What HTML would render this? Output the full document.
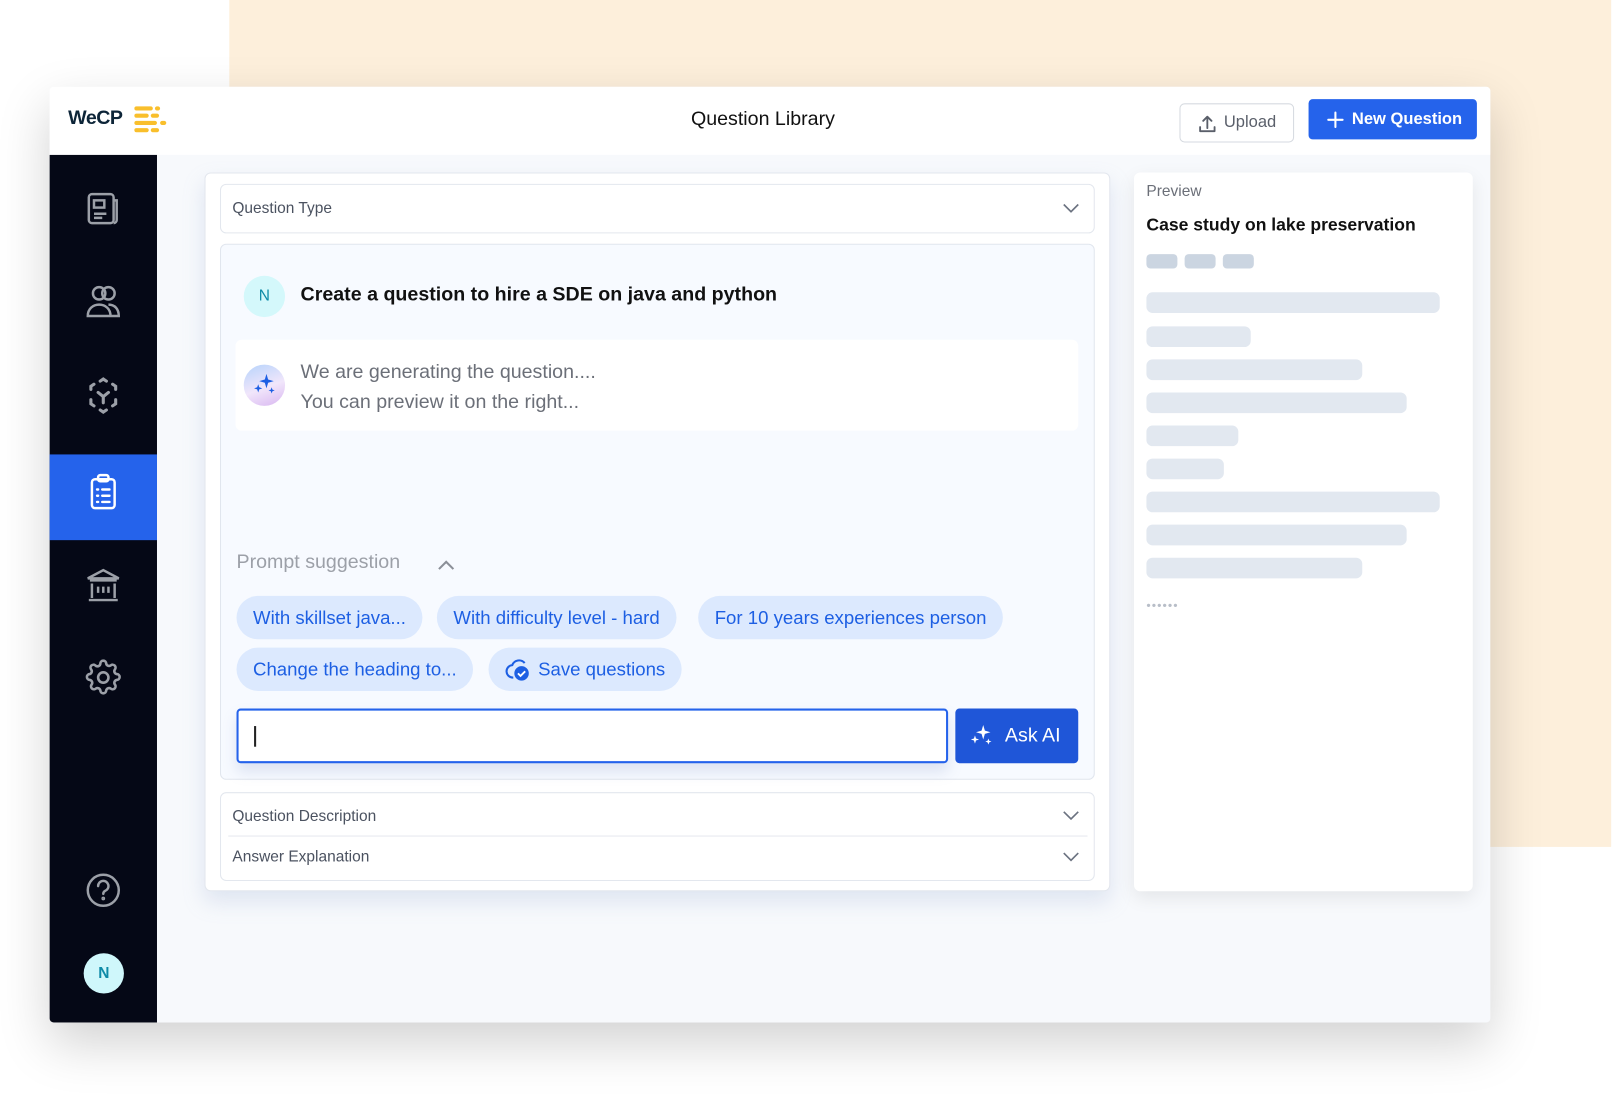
<!DOCTYPE html>
<html><head><meta charset="utf-8"><style>
*{box-sizing:border-box;margin:0;padding:0}
html,body{width:1619px;height:1098px;overflow:hidden;background:#fff;font-family:"Liberation Sans",sans-serif}
#w{position:absolute;left:0;top:0;width:1568px;height:1064px;transform:scale(1.0328);transform-origin:0 0}
.abs{position:absolute}
.peach{left:222px;top:0;width:1338px;height:820px;background:#fdefdb}
.win{left:48px;top:84px;width:1395px;height:906px;background:#f7f9fc;box-shadow:0 20px 50px rgba(0,0,0,.18);border-radius:4px;overflow:hidden}
.hdr{left:0;top:0;width:1395px;height:66px;background:#fff}
.side{left:0;top:66px;width:104px;height:840px;background:#050816}
.ico{position:absolute;left:32px;width:40px;height:40px}
.card{background:#fff;border:1px solid #e3e7ee;border-radius:6px}
.chip{position:absolute;height:42px;border-radius:21px;background:#dce9fe;color:#1d5fe3;font-size:18px;line-height:42px;padding:0 16px}
.sk{position:absolute;left:12px;height:20px;background:#e2e8f0;border-radius:6px}
.chev{position:absolute;right:14px;width:16px;height:10px}
</style></head><body><div id="w">
<div class="abs peach"></div>
<div class="abs win">
 <div class="abs hdr">
  <div class="abs" style="left:18px;top:20px;font-size:19px;font-weight:bold;color:#0d2538;letter-spacing:-.5px">WeCP</div>
  <svg class="abs" style="left:82px;top:18px" width="34" height="28" viewBox="0 0 34 28"><g fill="#f9bf2c"><rect x="0" y="1" width="18" height="4" rx="2"/><rect x="20" y="1" width="5" height="4" rx="2"/><rect x="0" y="8" width="14" height="4" rx="2"/><rect x="16" y="8" width="8" height="4" rx="2"/><rect x="0" y="15" width="22" height="4" rx="2"/><rect x="25" y="15" width="6" height="4" rx="2"/><rect x="0" y="22" width="14" height="4" rx="2"/><rect x="16" y="22" width="8" height="4" rx="2"/></g></svg>
  <div class="abs" style="left:621px;top:21px;font-size:19px;color:#111">Question Library</div>
  <div class="abs" style="left:1094px;top:16px;width:111px;height:38px;border:1px solid #d6dae0;border-radius:5px;color:#5a5f6a;font-size:16px;line-height:36px;padding-left:42px">Upload
   <svg class="abs" style="left:16px;top:9px" width="20" height="20" viewBox="0 0 20 20" fill="none" stroke="#5a5f6a" stroke-width="1.8" stroke-linecap="round" stroke-linejoin="round"><path d="M10 14V3M6 7l4-4 4 4M3 13v4h14v-4"/></svg></div>
  <div class="abs" style="left:1219px;top:12px;width:163px;height:39px;background:#2563eb;border-radius:4px;color:#fff;font-size:16px;font-weight:bold;line-height:39px;padding-left:42px">New Question
   <svg class="abs" style="left:18px;top:12px" width="16" height="16" viewBox="0 0 16 16" stroke="#fff" stroke-width="2" stroke-linecap="round"><path d="M8 1v14M1 8h14"/></svg></div>
 </div>
 <div class="abs side">
  <svg class="ico" style="top:32px" viewBox="0 0 40 40" fill="none" stroke="#9ca0a8" stroke-width="2.4"><rect x="6" y="6" width="24" height="28" rx="3"/><path d="M30 12h3v19a3 3 0 0 1-3 3"/><rect x="11" y="12" width="10" height="7"/><path d="M11 25h12M11 29h8"/></svg>
  <svg class="ico" style="top:122px" viewBox="0 0 40 40" fill="none" stroke="#9ca0a8" stroke-width="2.4"><circle cx="16" cy="12" r="6"/><circle cx="25" cy="12" r="6"/><path d="M5 34c0-7 5-11 11-11s11 4 11 11zM25 23c6 0 10 4 10 11H27"/></svg>
  <svg class="ico" style="top:213px" viewBox="0 0 40 40" fill="none" stroke="#9ca0a8" stroke-width="3" stroke-linecap="round"><path d="M17 6l3-2 3 2M8 14v-3l3-2M29 9l3 2v3M8 24v4l3 2M32 24v4l-3 2M17 34l3 2 3-2M15 17l5 4 5-4M20 21v6"/></svg>
  <div class="abs" style="left:0;top:290px;width:104px;height:83px;background:#2563eb"></div>
  <svg class="ico" style="top:306px" viewBox="0 0 40 40" fill="none" stroke="#fff" stroke-width="2.4" stroke-linecap="round"><rect x="9" y="8" width="22" height="28" rx="3"/><rect x="15" y="4" width="10" height="6" rx="2"/><path d="M14 18h1M19 18h7M14 24h1M19 24h7M14 30h1M19 30h7"/></svg>
  <svg class="ico" style="top:396px" viewBox="0 0 40 40" fill="none" stroke="#9ca0a8" stroke-width="2.4"><path d="M5 14L20 6l15 8zM7 16h26M9 19v14M31 19v14M6 35h28M15 22v6M20 22v6M25 22v6"/></svg>
  <svg class="ico" style="top:486px" viewBox="0 0 24 24" fill="none" stroke="#9ca0a8" stroke-width="1.5"><circle cx="12" cy="12" r="3"/><path d="M10.3 3.9a1.7 1.7 0 0 1 3.4 0 1.7 1.7 0 0 0 2.6 1.1 1.7 1.7 0 0 1 2.4 2.4 1.7 1.7 0 0 0 1.1 2.6 1.7 1.7 0 0 1 0 3.4 1.7 1.7 0 0 0-1.1 2.6 1.7 1.7 0 0 1-2.4 2.4 1.7 1.7 0 0 0-2.6 1.1 1.7 1.7 0 0 1-3.4 0 1.7 1.7 0 0 0-2.6-1.1 1.7 1.7 0 0 1-2.4-2.4 1.7 1.7 0 0 0-1.1-2.6 1.7 1.7 0 0 1 0-3.4A1.7 1.7 0 0 0 5 7.4 1.7 1.7 0 0 1 7.4 5a1.7 1.7 0 0 0 2.9-1.1z"/></svg>
  <svg class="ico" style="top:692px" viewBox="0 0 40 40" fill="none" stroke="#9ca0a8" stroke-width="2.4" stroke-linecap="round"><circle cx="20" cy="20" r="15"/><path d="M15 16a5 5 0 1 1 7 4.5c-1.5.7-2 1.5-2 3"/><circle cx="20" cy="28" r=".6" fill="#9ca0a8"/></svg>
  <div class="abs" style="left:33px;top:773px;width:39px;height:39px;border-radius:50%;background:#cff7fb;color:#0e8ba8;font-weight:bold;font-size:15px;text-align:center;line-height:39px">N</div>
 </div>
 <div class="abs card" style="left:150px;top:83px;width:877px;height:696px;box-shadow:0 10px 20px rgba(150,170,210,.25)">
  <div class="abs card" style="left:14px;top:10px;width:847px;height:48px;color:#4b5260;font-size:15px;line-height:46px;padding-left:11px">Question Type
   <svg class="chev" style="top:18px" viewBox="0 0 16 10" fill="none" stroke="#6b7280" stroke-width="1.6"><path d="M1 1l7 7 7-7"/></svg></div>
  <div class="abs" style="left:14px;top:68px;width:847px;height:519px;background:#f7faff;border:1px solid #e1e6ee;border-radius:6px">
   <div class="abs" style="left:22px;top:30px;width:40px;height:40px;border-radius:50%;background:#d4f8fb;color:#0e8ba8;font-size:15px;text-align:center;line-height:40px">N</div>
   <div class="abs" style="left:77px;top:38px;font-size:19px;font-weight:bold;color:#111">Create a question to hire a SDE on java and python</div>
   <div class="abs" style="left:14px;top:92px;width:816px;height:88px;background:#fff;border-radius:6px">
    <div class="abs" style="left:8px;top:24px;width:40px;height:40px;border-radius:50%;background:linear-gradient(160deg,#b6d3fb,#f1e6fb 55%,#d8b6f0)"></div>
    <svg class="abs" style="left:14px;top:30px" width="28" height="28" viewBox="0 0 28 28" fill="#1d5fe3"><path d="M16 3l1.6 5.4L23 10l-5.4 1.6L16 17l-1.6-5.4L9 10l5.4-1.6zM8 13l1 3 3 1-3 1-1 3-1-3-3-1 3-1zM21 16l.8 2.2L24 19l-2.2.8L21 22l-.8-2.2L18 19l2.2-.8z"/></svg>
    <div class="abs" style="left:63px;top:17px;font-size:19px;color:#6b6f78;line-height:29px">We are generating the question....<br>You can preview it on the right...</div>
   </div>
   <div class="abs" style="left:15px;top:297px;font-size:19px;color:#9ca0a8">Prompt suggestion</div>
   <svg class="abs" style="left:210px;top:305px" width="16" height="10" viewBox="0 0 16 10" fill="none" stroke="#8b8f98" stroke-width="2"><path d="M1 9l7-7 7 7"/></svg>
   <div class="chip" style="left:15px;top:340px">With skillset java...</div>
   <div class="chip" style="left:209px;top:340px">With difficulty level - hard</div>
   <div class="chip" style="left:462px;top:340px">For 10 years experiences person</div>
   <div class="chip" style="left:15px;top:390px">Change the heading to...</div>
   <div class="chip" style="left:259px;top:390px;padding-left:48px">Save questions
    <svg class="abs" style="left:15px;top:9px" width="28" height="26" viewBox="0 0 28 26" fill="none"><path d="M9 20a6 6 0 0 1-1-12 7 7 0 0 1 12-2" stroke="#1d5fe3" stroke-width="2"/><circle cx="17" cy="16" r="7" fill="#1d5fe3"/><path d="M13.5 16l2.5 2.5 4.5-4.5" stroke="#fff" stroke-width="1.8"/></svg></div>
   <div class="abs" style="left:15px;top:449px;width:689px;height:53px;background:#fff;border:2px solid #2563eb;border-radius:4px;box-shadow:0 8px 14px rgba(120,140,190,.2)"><div class="abs" style="left:15px;top:15px;width:2px;height:20px;background:#222"></div></div>
   <div class="abs" style="left:711px;top:449px;width:119px;height:53px;background:#1f56d8;border-radius:4px;color:#fff;font-size:19px;line-height:53px;padding-left:48px">Ask AI
    <svg class="abs" style="left:10px;top:13px" width="30" height="28" viewBox="0 0 28 28" fill="#fff"><path d="M16 3l1.6 5.4L23 10l-5.4 1.6L16 17l-1.6-5.4L9 10l5.4-1.6zM8 13l1 3 3 1-3 1-1 3-1-3-3-1 3-1zM21 16l.8 2.2L24 19l-2.2.8L21 22l-.8-2.2L18 19l2.2-.8z"/></svg></div>
  </div>
  <div class="abs card" style="left:14px;top:599px;width:847px;height:86px">
   <div class="abs" style="left:11px;top:14px;font-size:15px;color:#4b5260">Question Description</div>
   <svg class="chev" style="top:17px" viewBox="0 0 16 10" fill="none" stroke="#6b7280" stroke-width="1.6"><path d="M1 1l7 7 7-7"/></svg>
   <div class="abs" style="left:7px;top:41px;width:832px;height:1px;background:#e6e9ee"></div>
   <div class="abs" style="left:11px;top:53px;font-size:15px;color:#4b5260">Answer Explanation</div>
   <svg class="chev" style="top:57px" viewBox="0 0 16 10" fill="none" stroke="#6b7280" stroke-width="1.6"><path d="M1 1l7 7 7-7"/></svg>
  </div>
 </div>
 <div class="abs" style="left:1050px;top:83px;width:328px;height:696px;background:#fff;border-radius:6px;box-shadow:0 6px 18px rgba(0,0,0,.08)">
  <div class="abs" style="left:12px;top:10px;font-size:15px;color:#6b6f78">Preview</div>
  <div class="abs" style="left:12px;top:41px;font-size:17px;font-weight:bold;color:#111">Case study on lake preservation</div>
  <div class="sk" style="top:79px;width:30px;height:14px;background:#cbd5e1;border-radius:4px"></div>
  <div class="sk" style="left:49px;top:79px;width:30px;height:14px;background:#cbd5e1;border-radius:4px"></div>
  <div class="sk" style="left:86px;top:79px;width:30px;height:14px;background:#cbd5e1;border-radius:4px"></div>
  <div class="sk" style="top:116px;width:284px"></div>
  <div class="sk" style="top:149px;width:101px"></div>
  <div class="sk" style="top:181px;width:209px"></div>
  <div class="sk" style="top:213px;width:252px"></div>
  <div class="sk" style="top:245px;width:89px"></div>
  <div class="sk" style="top:277px;width:75px"></div>
  <div class="sk" style="top:309px;width:284px"></div>
  <div class="sk" style="top:341px;width:252px"></div>
  <div class="sk" style="top:373px;width:209px"></div>
  <div class="abs" style="left:12px;top:412px;font-size:12px;color:#b8bec8;letter-spacing:1px">••••••</div>
 </div>
</div>
</div></body></html>
